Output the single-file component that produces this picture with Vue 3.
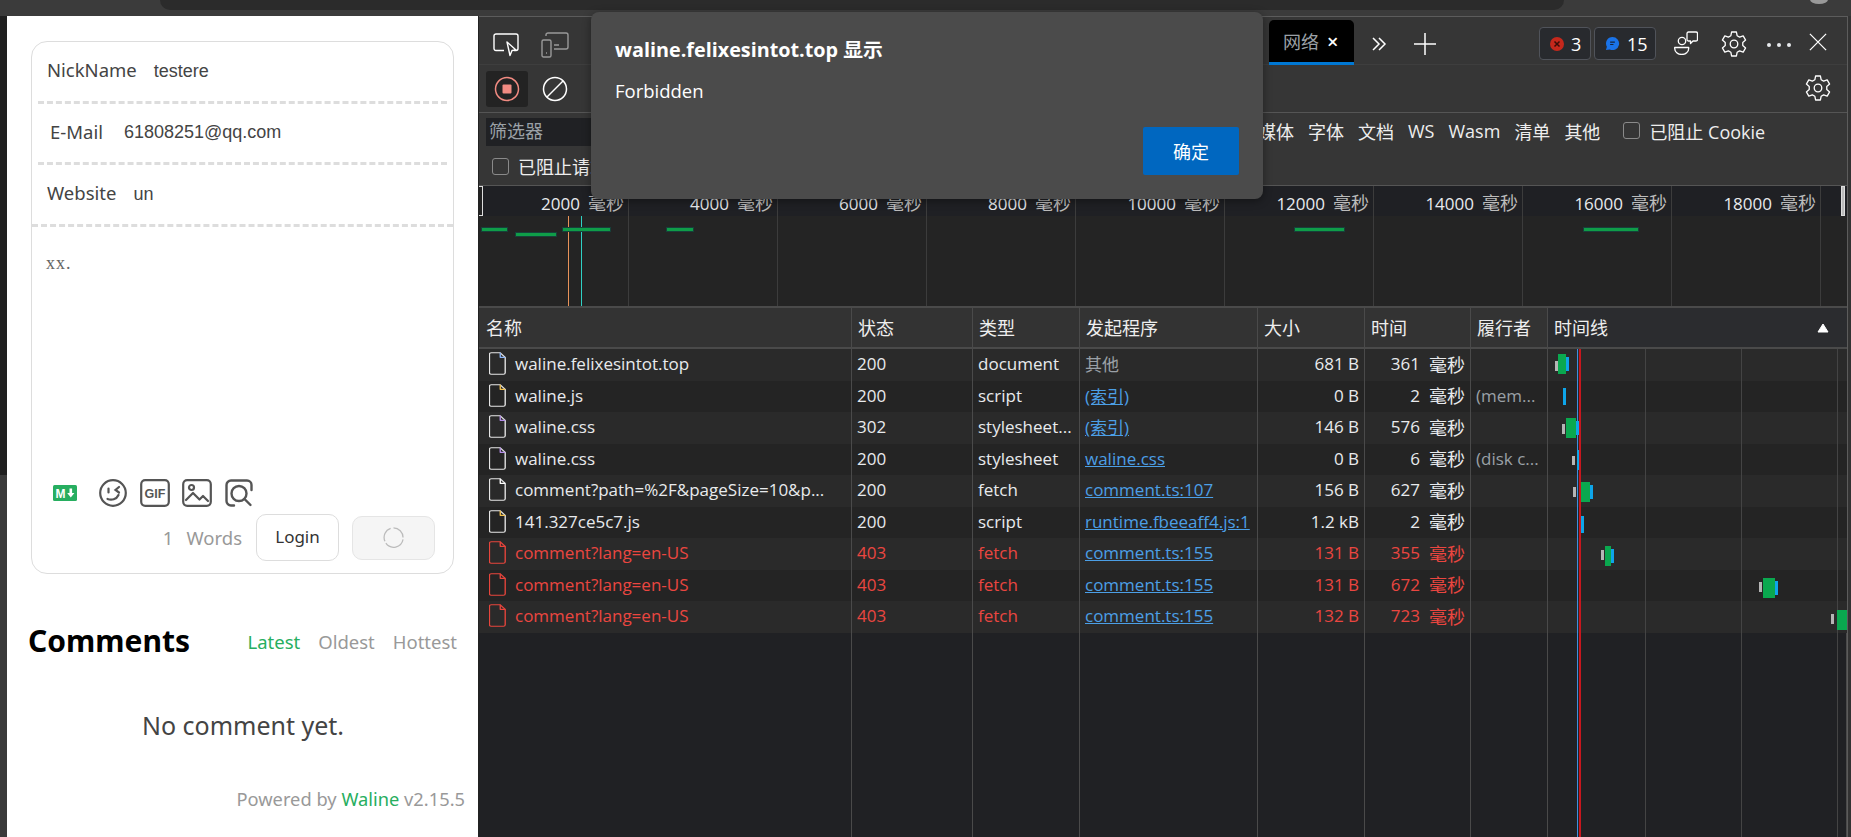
<script setup>
const gear = (() => {
  const pts = []
  for (let i = 0; i < 6; i++) {
    const a = (i * Math.PI) / 3 - Math.PI / 2
    const add = (r, d) => pts.push([12 + r * Math.cos(a + d), 12 + r * Math.sin(a + d)])
    add(8.2, -0.36); add(11.3, -0.2); add(11.3, 0.2); add(8.2, 0.36)
  }
  return 'M' + pts.map(p => p[0].toFixed(2) + ' ' + p[1].toFixed(2)).join('L') + 'Z'
})()

const filters = ['媒体', '字体', '文档', 'WS', 'Wasm', '清单', '其他']
const ticks = ['2000', '4000', '6000', '8000', '10000', '12000', '14000', '16000', '18000']
const marks = [
  { x: 3, y: 42, w: 25 }, { x: 37, y: 47, w: 40 }, { x: 84, y: 42, w: 47 }, { x: 188, y: 42, w: 26 },
  { x: 816, y: 42, w: 49 }, { x: 1105, y: 42, w: 54 }
]
const heads = ['名称', '状态', '类型', '发起程序', '大小', '时间', '履行者', '时间线']
const rows = [
  { n: 'waline.felixesintot.top', s: '200', t: 'document', i: '其他', plain: true, z: '681 B', d: '361', f: '', c: '#8ab4f8' },
  { n: 'waline.js', s: '200', t: 'script', i: '(索引)', z: '0 B', d: '2', f: '(mem...', c: '#f2c14e' },
  { n: 'waline.css', s: '302', t: 'stylesheet...', i: '(索引)', z: '146 B', d: '576', f: '', c: '#b48ee8' },
  { n: 'waline.css', s: '200', t: 'stylesheet', i: 'waline.css', z: '0 B', d: '6', f: '(disk c...', c: '#b48ee8' },
  { n: 'comment?path=%2F&pageSize=10&p...', s: '200', t: 'fetch', i: 'comment.ts:107', z: '156 B', d: '627', f: '', c: '#ffffff' },
  { n: '141.327ce5c7.js', s: '200', t: 'script', i: 'runtime.fbeeaff4.js:1', z: '1.2 kB', d: '2', f: '', c: '#f2c14e' },
  { n: 'comment?lang=en-US', s: '403', t: 'fetch', i: 'comment.ts:155', z: '131 B', d: '355', f: '', err: true },
  { n: 'comment?lang=en-US', s: '403', t: 'fetch', i: 'comment.ts:155', z: '131 B', d: '672', f: '', err: true },
  { n: 'comment?lang=en-US', s: '403', t: 'fetch', i: 'comment.ts:155', z: '132 B', d: '723', f: '', err: true }
]
const bars = [
  { k: 'grey', x: 6.5, y: 12, w: 3, h: 10 }, { k: 'green', x: 10, y: 5, w: 8, h: 20 }, { k: 'blue', x: 18, y: 8, w: 3, h: 14 },
  { k: 'blue', x: 15, y: 39, w: 3, h: 17 },
  { k: 'grey', x: 14, y: 75, w: 3, h: 10 }, { k: 'green', x: 18, y: 69, w: 10, h: 20 }, { k: 'blue', x: 28, y: 72, w: 3, h: 14 },
  { k: 'grey', x: 24, y: 107, w: 3, h: 9 }, { k: 'blue', x: 29, y: 101, w: 4, h: 20 },
  { k: 'grey', x: 25, y: 138, w: 3, h: 10 }, { k: 'green', x: 31, y: 133, w: 11, h: 20 }, { k: 'blue', x: 42, y: 136, w: 3, h: 14 },
  { k: 'blue', x: 33, y: 167, w: 3, h: 17 },
  { k: 'grey', x: 53, y: 201, w: 3, h: 10 }, { k: 'green', x: 57, y: 197, w: 6, h: 20 }, { k: 'blue', x: 63, y: 200, w: 3, h: 14 },
  { k: 'grey', x: 211, y: 233, w: 3, h: 10 }, { k: 'green', x: 215, y: 229, w: 12, h: 20 }, { k: 'blue', x: 227, y: 232, w: 3, h: 14 },
  { k: 'grey', x: 283, y: 265, w: 3, h: 10 }, { k: 'green', x: 289, y: 261, w: 11, h: 20 }
]
const box = b => ({ left: b.x + 'px', top: b.y + 'px', width: b.w + 'px', height: b.h + 'px' })
</script>

<template>
  <div class="screen">
    <header class="browser-top"><div class="address"></div><div class="avatar"></div></header>
    <div class="main">
      <aside class="strip"><div class="strip-top"></div></aside>

      <section class="page">
        <div class="card">
          <div class="field f1"><label>NickName</label><span>testere</span></div>
          <div class="field f2"><label>E-Mail</label><span>61808251@qq.com</span></div>
          <div class="field f3"><label>Website</label><span>un</span></div>
          <div class="textarea">xx.</div>
          <div class="icons">
            <svg class="md" viewBox="0 0 24 16"><rect width="24" height="16" rx="1.5" fill="#27ae60"/><text x="2.500" y="12.500" class="md-text">M</text><path d="M16.500 3.500h2.600v4.500h2.300L17.800 12.500 14.200 8h2.300z" fill="#fff"/></svg>
            <svg class="ic smile" viewBox="0 0 28 28" fill="none" stroke="#555" stroke-width="2.200" stroke-linecap="round"><circle cx="14" cy="14" r="12.800"/><path d="M9.500 9.500v4M20 8l-3.500 3 3.500 2.500M8.500 20c4 1.500 9 .5 11-4"/></svg>
            <svg class="ic gif" viewBox="0 0 30 28" fill="none" stroke="#555"><rect x="1.200" y="1.200" width="27.600" height="25.600" rx="4" stroke-width="2.200"/><text x="15" y="18.800" text-anchor="middle" class="gif-text">GIF</text></svg>
            <svg class="ic pic" viewBox="0 0 30 28" fill="none" stroke="#555" stroke-width="2.200" stroke-linecap="round" stroke-linejoin="round"><rect x="1.200" y="1.200" width="27.600" height="25.600" rx="4"/><circle cx="9.500" cy="8.500" r="2.500"/><path d="M4 21l7-7 6.500 6.500 3.500-3.500 5 5"/></svg>
            <svg class="ic search" viewBox="0 0 28 28" fill="none" stroke="#555" stroke-width="2.400" stroke-linecap="round"><path d="M9 26.500H6a4.500 4.500 0 0 1-4.500-4.500V6A4.500 4.500 0 0 1 6 1.500h16A4.500 4.500 0 0 1 26.500 6v5"/><circle cx="14" cy="14.500" r="7.500"/><path d="M19.500 20l6 6"/></svg>
          </div>
          <div class="actions">
            <span class="count"><i>1</i>Words</span>
            <button class="login">Login</button>
            <button class="submit"><svg viewBox="0 0 22 22" fill="none" stroke="#bbb" stroke-width="1.300"><path d="M11 1a10 10 0 0 1 10 10M21 13a10 10 0 0 1-18 4M2 15A10 10 0 0 1 8 1.500"/></svg></button>
          </div>
        </div>
        <div class="comments-head">
          <h2>Comments</h2>
          <ul><li class="on">Latest</li><li>Oldest</li><li>Hottest</li></ul>
        </div>
        <p class="empty">No comment yet.</p>
        <p class="powered">Powered by <b>Waline</b> v2.15.5</p>
      </section>

      <section class="devtools">
        <div class="bar bar1">
          <svg class="tool" viewBox="0 0 28 26" fill="none" stroke="#fff" stroke-width="1.400" stroke-linejoin="round"><path d="M11 17.500H3a2 2 0 0 1-2-2V3a2 2 0 0 1 2-2h20a2 2 0 0 1 2 2v12.500a2 2 0 0 1-2 2h-2"/><path d="M14 9l9 8-4 .5-2 5z"/></svg>
          <svg class="tool t2" viewBox="0 0 28 26" fill="none" stroke="#999" stroke-width="1.400" stroke-linejoin="round"><rect x="1" y="8" width="9" height="17" rx="1.500"/><path d="M5 4V3a2 2 0 0 1 2-2h18a2 2 0 0 1 2 2v12a2 2 0 0 1-2 2H13M13 13h5M5 21h1"/></svg>
          <div class="tab"><span>网络</span><em>×</em></div>
          <svg class="more" viewBox="0 0 16 16" fill="none" stroke="#fff" stroke-width="1.500"><path d="M2 2l6 6-6 6M8 2l6 6-6 6"/></svg>
          <svg class="plus" viewBox="0 0 24 24" stroke="#fff" stroke-width="1.500"><path d="M12 1v22M1 12h22"/></svg>
          <div class="badge b1"><i class="dot"><svg viewBox="0 0 14 14" stroke="#3a0d08" stroke-width="1.500"><path d="M4.500 4.500l5 5M9.500 4.500l-5 5"/></svg></i>3</div>
          <div class="badge b2"><svg class="chat" viewBox="0 0 16 16"><path d="M8 1a7 7 0 1 1-3 13.300L1 15l1-3.500A7 7 0 0 1 8 1z" fill="#1a73e8"/><path d="M5.500 6.500h5M5.500 9h3.500" stroke="#16243a" stroke-width="1.200"/></svg>15</div>
          <svg class="feedback" viewBox="0 0 24 24" fill="none" stroke="#fff" stroke-width="1.300" stroke-linejoin="round"><circle cx="8" cy="10" r="3.700"/><path d="M.7 16.500h14v1a7 6 0 0 1-14 0zM14.500 1h7.500a1.500 1.500 0 0 1 1.500 1.500v6a1.500 1.500 0 0 1-1.500 1.500h-3l-2.500 2.500V10h-2a1.500 1.500 0 0 1-1.500-1.500v-6A1.500 1.500 0 0 1 14.500 1z"/></svg>
          <svg class="gear g1" viewBox="0 0 24 24" fill="none" stroke="#fff" stroke-width="1.200" stroke-linejoin="round"><path :d="gear"/><circle cx="12" cy="12" r="3.500"/></svg>
          <div class="dots"><i></i><i></i><i></i></div>
          <svg class="close" viewBox="0 0 20 20" stroke="#fff" stroke-width="1.400"><path d="M1 1l18 18M19 1L1 19"/></svg>
        </div>

        <div class="bar bar2">
          <div class="rec">
            <svg viewBox="0 0 26 26"><circle cx="13" cy="13" r="11.500" fill="none" stroke="#f28b82" stroke-width="1.500"/><rect x="8.500" y="8.500" width="9" height="9" rx="1" fill="#f28b82"/></svg>
          </div>
          <svg class="clear" viewBox="0 0 26 26" fill="none" stroke="#fff" stroke-width="1.500"><circle cx="13" cy="13" r="11.500"/><path d="M21 5L5 21"/></svg>
          <svg class="gear g2" viewBox="0 0 24 24" fill="none" stroke="#fff" stroke-width="1.200" stroke-linejoin="round"><path :d="gear"/><circle cx="12" cy="12" r="3.500"/></svg>
        </div>

        <div class="bar bar3">
          <div class="filter-line">
            <div class="filter">筛选器</div>
            <div class="types">
              <span v-for="f in filters" :key="f">{{ f }}</span>
              <label class="check"><i class="box"></i>已阻止 Cookie</label>
            </div>
          </div>
          <label class="check blocked"><i class="box"></i>已阻止请求</label>
        </div>

        <div class="overview">
          <div v-for="t in ticks" :key="t" class="tick">{{ t }}<span>毫秒</span></div>
          <i class="handle left"></i>
          <i class="handle right"></i>
          <i class="vline orange"></i>
          <i class="vline teal"></i>
          <i v-for="(m, i) in marks" :key="i" class="mark" :style="{ left: m.x + 'px', top: m.y + 'px', width: m.w + 'px' }"></i>
        </div>

        <div class="table">
          <div class="head">
            <div v-for="h in heads" :key="h" class="th">{{ h }}</div>
            <svg class="sort" viewBox="0 0 12 10"><path d="M6 1l5 8H1z" fill="#fff" stroke="#fff" stroke-linejoin="round"/></svg>
          </div>
          <div v-for="(r, i) in rows" :key="i" class="row" :class="{ err: r.err, odd: i % 2 === 1 }">
            <div class="td name">
              <svg class="file" viewBox="0 0 20 30" fill="none" stroke-width="1.500" stroke-linejoin="round" preserveAspectRatio="none">
                <path d="M2.500 1h10L18 7v20a2 2 0 0 1-2 2H2.500a2 2 0 0 1-2-2V3a2 2 0 0 1 2-2z" :stroke="r.err ? '#e8453c' : '#e6e6e6'"/>
                <path d="M12.500 1v6H18" :stroke="r.err ? '#e8453c' : r.c"/>
              </svg>
              <span>{{ r.n }}</span>
            </div>
            <div class="td">{{ r.s }}</div>
            <div class="td">{{ r.t }}</div>
            <div class="td"><span :class="r.plain ? 'muted' : 'link'">{{ r.i }}</span></div>
            <div class="td right">{{ r.z }}</div>
            <div class="td right">{{ r.d }}<span class="unit">毫秒</span></div>
            <div class="td muted">{{ r.f }}</div>
            <div class="td last"></div>
          </div>
          <div class="row filler">
            <div class="td" v-for="n in 8" :key="n"></div>
          </div>
          <div class="waterfall">
            <i class="wline"></i><i class="wline w2"></i>
            <i v-for="(b, i) in bars" :key="i" class="wbar" :class="b.k" :style="box(b)"></i>
          </div>
        </div>
      </section>
    </div>

    <div class="dialog">
      <h3>waline.felixesintot.top 显示</h3>
      <p>Forbidden</p>
      <button>确定</button>
    </div>
  </div>
</template>

<style>
html, body { margin: 0; background: #333; overflow: hidden; }
</style>

<style scoped>
* { box-sizing: border-box; }
.screen { position: relative; width: 1851px; height: 837px; overflow: hidden; display: flex; flex-direction: column; font-family: "Open Sans", "Noto Sans CJK SC", sans-serif; }
.browser-top { height: 16px; background: #3b3b3b; position: relative; flex: none; padding-left: 160px; }
.address { width: 1404px; height: 10px; background: #2b2b2b; border-radius: 0 0 14px 14px; }
.avatar { position: absolute; left: 1810px; top: -5px; width: 18px; height: 9px; border-radius: 50%; background: #999; }
.main { flex: 1; display: flex; min-height: 0; }
.strip { width: 7px; background: #3a3a3a; flex: none; }
.strip-top { height: 459px; background: #1f1f1f; }

.page { width: 472px; flex: none; background: #fff; border-right: 1px solid #222; padding: 25px 12px 0 24px; display: flex; flex-direction: column; }
.card { width: 423px; height: 533px; border: 1px solid #ddd; border-radius: 16px; display: flex; flex-direction: column; flex: none; }
.field { margin: 0 6px; border-bottom: 3px dashed #ddd; display: flex; align-items: center; font-family: "Noto Sans", sans-serif; font-size: 18.500px; color: #444; padding-bottom: 1px; white-space: nowrap; }
.field label { margin-top: -3px; }
.field span { font-family: "Liberation Sans", sans-serif; font-size: 18px; color: #444; }
.f1 { padding-left: 9px; gap: 17px; height: 62px; }
.f2 { padding-left: 12px; gap: 21px; height: 61px; }
.f3 { gap: 17px; margin: 0; padding-left: 15px; height: 62px; }
.textarea { flex: 1; padding: 26px 14px 0; font-family: "Liberation Serif", serif; font-size: 18px; letter-spacing: 1px; color: #666; }
.icons { display: flex; align-items: center; height: 30px; padding-left: 21px; margin-bottom: 6px; }
.md { width: 24px; height: 16px; margin-right: 22px; }
.md-text { font: 700 12px "Liberation Sans", sans-serif; fill: #fff; }
.gif-text { font: 700 12.500px "Liberation Sans", sans-serif; fill: #555; stroke: none; }
.ic { height: 28px; flex: none; }
.smile { width: 28px; margin-right: 13px; }
.gif { width: 30px; margin-right: 12px; }
.pic { width: 30px; margin-right: 13px; }
.search { width: 28px; }
.actions { display: flex; align-items: center; justify-content: flex-end; height: 47px; padding-right: 18px; margin-bottom: 12px; }
.count { font-family: "Noto Sans", sans-serif; font-size: 18.500px; color: #999; margin-right: 14px; }
.count i { font-style: normal; margin-right: 13px; }
.login { width: 83px; height: 47px; border: 1px solid #ddd; border-radius: 10px; background: #fff; font: 17px/42px "Noto Sans", sans-serif; color: #333; padding: 0 0 2px; }
.submit { width: 83px; height: 44px; margin-left: 13px; border: 1px solid #e5e5e5; border-radius: 10px; background: #f5f5f5; padding: 0; display: flex; align-items: center; justify-content: center; }
.submit svg { width: 21px; height: 21px; }
.comments-head { display: flex; align-items: center; justify-content: space-between; margin: 41px 9px 0 -3px; height: 50px; }
.comments-head h2 { margin: 0; font: 700 30px "Noto Sans", sans-serif; color: #000; }
.comments-head ul { display: flex; gap: 18px; margin: 2px 0 0; padding: 0; list-style: none; font: 18.500px "Noto Sans", sans-serif; color: #999; }
.comments-head .on { color: #27ae60; }
.empty { margin: 41px 11px 0 0; text-align: center; font: 25px "Noto Sans", sans-serif; color: #444; line-height: 38px; }
.powered { margin: 42px 1px 0 0; text-align: right; font: 18.300px "Noto Sans", sans-serif; color: #999; line-height: 26px; }
.powered b { font-weight: 400; color: #27ae60; }

.devtools { width: 1369px; flex: none; background: #3a3a3a; border-top: 1px solid #5c5c5c; border-right: 1px solid #5c5c5c; display: flex; flex-direction: column; color: #e8eaed; font-size: 17px; }
.bar { flex: none; background: #363636; display: flex; align-items: center; position: relative; }
.bar1 { height: 48px; border-bottom: 1px solid #3e3e3e; }
.tool { width: 28px; height: 26px; position: absolute; left: 14px; top: 16px; }
.t2 { left: 62px; top: 15px; }
.tab { position: absolute; left: 790px; top: 3px; width: 85px; height: 45px; background: #000; border-radius: 5px 5px 0 0; border-bottom: 3px solid #0078d4; display: flex; align-items: center; padding-left: 14px; font-size: 18px; color: #9aa0a6; }
.tab em { font-style: normal; color: #fff; font-size: 20px; font-weight: 600; margin-left: 8px; }
.more { position: absolute; left: 892px; top: 19px; width: 16px; height: 16px; }
.plus { position: absolute; left: 934px; top: 15px; width: 24px; height: 24px; }
.badge { position: absolute; top: 10px; height: 33px; border: 1px solid #50535a; border-radius: 4px; background: #282a2e; display: flex; align-items: center; font-size: 18px; color: #fff; padding-left: 10px; gap: 7px; }
.b1 { left: 1060px; width: 52px; }
.b2 { left: 1115px; width: 62px; }
.dot { width: 14px; height: 14px; border-radius: 50%; background: #c5281c; display: block; }
.dot svg { display: block; }
.chat { width: 15px; height: 15px; }
.feedback { position: absolute; left: 1195px; top: 14px; width: 24px; height: 24px; }
.gear { position: absolute; width: 26px; height: 26px; }
.g1 { left: 1242px; top: 14px; }
.g2 { left: 1326px; top: 10px; }
.dots { position: absolute; left: 1288px; top: 26px; display: flex; gap: 6px; }
.dots i { width: 4px; height: 4px; border-radius: 50%; background: #e8eaed; }
.close { position: absolute; left: 1330px; top: 16px; width: 18px; height: 18px; }
.bar2 { height: 48px; border-bottom: 1px solid #555; }
.rec { width: 42px; height: 36px; margin-left: 7px; border-radius: 3px; background: #232323; display: flex; align-items: center; justify-content: center; }
.rec svg { width: 26px; height: 26px; }
.clear { width: 26px; height: 26px; margin-left: 14px; }
.bar3 { height: 73px; display: block; border-bottom: 1px solid #555; padding-top: 5px; }
.filter-line { display: flex; align-items: center; height: 28px; }
.filter { width: 130px; height: 28px; margin-left: 7px; background: #202124; color: #9aa0a6; padding-left: 3px; line-height: 26px; font-size: 18px; }
.types { display: flex; gap: 14px; margin-left: 642px; align-items: center; color: #eee; font-size: 18px; white-space: nowrap; margin-top: -3px; }
.check { display: flex; align-items: center; gap: 9px; color: #eee; font-size: 18px; }
.types .check { margin-left: 9px; }
.box { width: 17px; height: 17px; border: 1.500px solid #8a8a8a; border-radius: 3px; display: block; }
.blocked { margin: 7px 0 0 13px; }

.overview { height: 122px; flex: none; display: flex; position: relative; background: linear-gradient(#1f2024 30px, #242424 30px); border-bottom: 2px solid #4a4a4a; }
.tick { width: 149px; flex: none; border-right: 1px solid #3c3c3c; text-align: right; padding: 6px 4px 0 0; font-size: 17px; color: #e8eaed; line-height: 23px; white-space: nowrap; }
.tick:first-child { width: 150px; }
.tick span { margin-left: 8px; font-size: 18px; color: #bbb; }
.handle { position: absolute; top: 0; width: 4px; height: 30px; border: 1px solid #ddd; }
.handle.left { left: 0; border-left: 0; background: #222; }
.handle.right { right: 2px; background: #bbb; }
.vline { position: absolute; top: 30px; bottom: 0; width: 1px; }
.orange { left: 89px; background: #e8935a; }
.teal { left: 102px; background: #2fd1c5; }
.mark { position: absolute; height: 3px; background: #0f9d48; outline: 1px solid #17403a; }

.table { flex: 1; display: flex; flex-direction: column; position: relative; min-height: 0; }
.head, .row { display: grid; grid-template-columns: 373px 121px 107px 178px 107px 106px 77px 1fr; }
.head { height: 41px; background: #333; border-bottom: 2px solid #4a4a4a; position: relative; flex: none; }
.th { border-right: 1px solid #4a4a4a; padding: 0 5px 2px 6px; display: flex; align-items: center; font-size: 18px; color: #eee; }
.th:first-child { padding-left: 7px; }
.th:last-of-type { background: #2b2c2f; border-right: 0; }
.sort { position: absolute; right: 18px; top: 15px; width: 12px; height: 10px; }
.row { height: 31.500px; background: #2a2a2a; flex: none; }
.row.odd { background: #242424; }
.row.err { color: #ea4640; }
.td { border-right: 1px solid #4a4a4a; padding: 0 5px 2px; display: flex; align-items: center; white-space: nowrap; overflow: hidden; }
.td.last { border-right: 0; }
.td.right { justify-content: flex-end; }
.name { padding-left: 10px; gap: 8px; }
.file { width: 18px; height: 23px; flex: none; }
.muted { color: #9aa0a6; }
.link { color: #4c9fe6; text-decoration: underline; }
.unit { margin-left: 9px; font-size: 18px; }
.row.filler { flex: 1; background: #202124; height: auto; }
.waterfall { position: absolute; left: 1069px; top: 41px; right: 0; bottom: 0; overflow: hidden; }
.waterfall::before, .waterfall::after { content: ""; position: absolute; top: 0; bottom: 0; width: 1px; }
.waterfall::before { left: 29px; background: #3f8fe0; }
.waterfall::after { left: 31px; width: 2px; background: #c8161d; }
.wline { position: absolute; top: 0; bottom: 0; left: 97px; width: 193px; border-left: 1px solid #444; border-right: 1px solid #444; }
.w2 { left: 193px; width: 1px; border-right: 0; }
.wbar { position: absolute; display: block; }
.grey { background: #b5b5b5; }
.green { background: #0aa84f; }
.blue { background: #0ea5e9; }

.dialog { position: absolute; left: 591px; top: 12px; width: 672px; height: 187px; background: #4b4b4b; border-radius: 8px; box-shadow: 0 2px 8px rgba(0,0,0,.4); padding: 24px; color: #fff; }
.dialog h3 { margin: 0; font-size: 19.800px; font-weight: 700; line-height: 28px; }
.dialog p { margin: 15px 0 0; font-size: 18.500px; line-height: 24px; }
.dialog button { position: absolute; right: 24px; bottom: 24px; width: 96px; height: 48px; border: 0; border-radius: 2px; background: #0067c0; color: #fff; font: 18px "Noto Sans CJK SC", sans-serif; padding: 0; }
</style>
